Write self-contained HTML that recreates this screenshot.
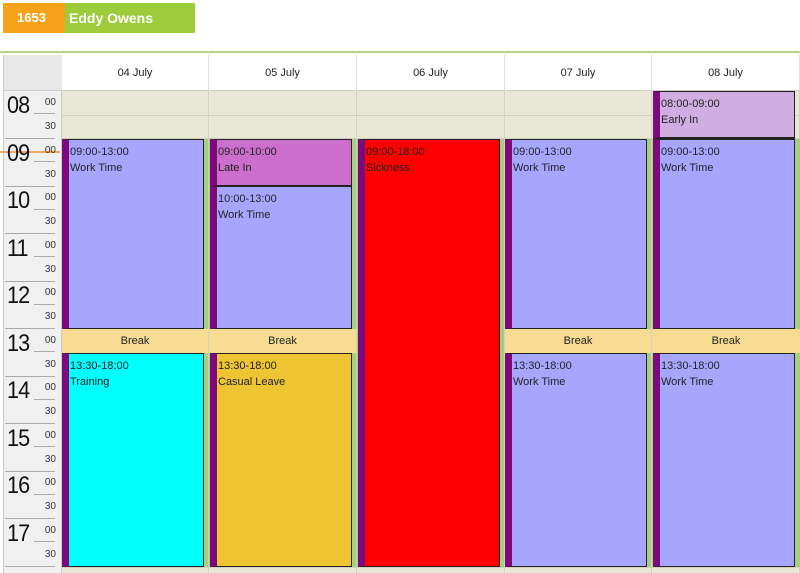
<!DOCTYPE html>
<html><head><meta charset="utf-8"><style>
*{margin:0;padding:0;box-sizing:border-box}
body{width:800px;height:573px;background:#fff;position:relative;overflow:hidden;font-family:"Liberation Sans","DejaVu Sans",sans-serif;font-size:11px;color:#222}
div{position:absolute}
.badge1{left:3px;top:3px;width:62px;height:30px;background:#f7a21b;color:#fff;font-weight:bold;font-size:13px;line-height:30px;padding-left:14px}
.badge2{left:65px;top:3px;width:130px;height:30px;background:#9ccc3c;color:#fff;font-weight:bold;font-size:14px;line-height:30px;padding-left:4px}
.gl{left:0;top:51px;width:800px;height:2px;background:#b9d48a}
.tc{left:3px;top:55px;width:59px;height:518px;background:#f0f0f0;border-left:1px solid #ccc;border-right:1px solid #ccc}
.hd{top:55px;height:36px;background:#fff;border-right:1px solid #ddd;border-bottom:1px solid #ccc;text-align:center;line-height:36px;font-size:11px}
.col{top:91px;height:482px;background:#e8e6d4;border-right:1px solid #d4d2c0}
.gr{top:139px;height:428px;background:#a6cf84}
.brk{top:329px;height:24px;background:#f5dc92;text-align:center;line-height:24px;font-size:11px}
.ln{height:1px;background:#d2d0be}
.ev{border:1px solid #222;border-left:7px solid #7c0a7c;padding:4px 0 0 1px;line-height:16px;font-size:11px}
.h{font-size:24px;color:#111;left:7px;width:30px;letter-spacing:-1px;transform:scaleX(0.9);transform-origin:left}
.m{font-size:10px;color:#333;left:36px;width:20px;text-align:right}
.hl{left:5px;width:50px;height:1px;background:#aaa}
.ml{left:34px;width:21px;height:1px;background:#aaa}
</style></head><body>
<div class="badge1">1653</div><div class="badge2">Eddy Owens</div>
<div class="gl"></div>
<div class="tc"></div>
<div style="left:3px;top:55px;width:59px;height:36px;background:#e8e8e8;border-bottom:1px solid #ccc;border-left:1px solid #ccc"></div>

<div class="hd" style="left:62px;width:147px">04 July</div>
<div class="hd" style="left:209px;width:148px">05 July</div>
<div class="hd" style="left:357px;width:148px">06 July</div>
<div class="hd" style="left:505px;width:147px">07 July</div>
<div class="hd" style="left:652px;width:148px">08 July</div>

<div class="col" style="left:62px;width:147px"></div>
<div class="col" style="left:209px;width:148px"></div>
<div class="col" style="left:357px;width:148px"></div>
<div class="col" style="left:505px;width:147px"></div>
<div class="col" style="left:652px;width:148px"></div>
<div class="ln" style="left:62px;top:115px;width:738px"></div>
<div class="ln" style="left:62px;top:138px;width:738px"></div>
<div class="ln" style="left:62px;top:567px;width:738px"></div>

<div class="gr" style="left:62px;width:146px"></div>
<div class="gr" style="left:209px;width:147px"></div>
<div class="gr" style="left:357px;width:147px"></div>
<div class="gr" style="left:505px;width:146px"></div>
<div class="gr" style="left:652px;width:148px"></div>

<div class="brk" style="left:62px;width:146px">Break</div>
<div class="brk" style="left:209px;width:147px">Break</div>
<div class="brk" style="left:505px;width:146px">Break</div>
<div class="brk" style="left:652px;width:148px">Break</div>

<div class="ev" style="left:62px;top:139px;width:142px;height:190px;background:#a6a6ff">09:00-13:00<br>Work Time</div>
<div class="ev" style="left:62px;top:353px;width:142px;height:214px;background:#00ffff">13:30-18:00<br>Training</div>
<div class="ev" style="left:210px;top:139px;width:142px;height:48px;background:#cc6ecc;border-bottom-width:2px">09:00-10:00<br>Late In</div>
<div class="ev" style="left:210px;top:186px;width:142px;height:143px;background:#a6a6ff">10:00-13:00<br>Work Time</div>
<div class="ev" style="left:210px;top:353px;width:142px;height:214px;background:#eec432">13:30-18:00<br>Casual Leave</div>
<div class="ev" style="left:358px;top:139px;width:142px;height:428px;background:#ff0000">09:00-18:00<br>Sickness</div>
<div class="ev" style="left:505px;top:139px;width:142px;height:190px;background:#a6a6ff">09:00-13:00<br>Work Time</div>
<div class="ev" style="left:505px;top:353px;width:142px;height:214px;background:#a6a6ff">13:30-18:00<br>Work Time</div>
<div class="ev" style="left:653px;top:91px;width:142px;height:48px;background:#d0aee2;border-bottom-width:2px">08:00-09:00<br>Early In</div>
<div class="ev" style="left:653px;top:139px;width:142px;height:190px;background:#a6a6ff">09:00-13:00<br>Work Time</div>
<div class="ev" style="left:653px;top:353px;width:142px;height:214px;background:#a6a6ff">13:30-18:00<br>Work Time</div>

<div style="left:0;top:151px;width:60px;height:2px;background:#f5a35a"></div>

<div class="h" style="top:92px">08</div><div class="m" style="top:97px">00</div><div class="ml" style="top:113px"></div><div class="m" style="top:121px">30</div>
<div class="hl" style="top:138px"></div>
<div class="h" style="top:140px">09</div><div class="m" style="top:145px">00</div><div class="ml" style="top:161px"></div><div class="m" style="top:169px">30</div>
<div class="hl" style="top:186px"></div>
<div class="h" style="top:187px">10</div><div class="m" style="top:192px">00</div><div class="ml" style="top:209px"></div><div class="m" style="top:216px">30</div>
<div class="hl" style="top:233px"></div>
<div class="h" style="top:235px">11</div><div class="m" style="top:240px">00</div><div class="ml" style="top:256px"></div><div class="m" style="top:264px">30</div>
<div class="hl" style="top:281px"></div>
<div class="h" style="top:282px">12</div><div class="m" style="top:287px">00</div><div class="ml" style="top:304px"></div><div class="m" style="top:311px">30</div>
<div class="hl" style="top:328px"></div>
<div class="h" style="top:330px">13</div><div class="m" style="top:335px">00</div><div class="ml" style="top:351px"></div><div class="m" style="top:359px">30</div>
<div class="hl" style="top:376px"></div>
<div class="h" style="top:377px">14</div><div class="m" style="top:382px">00</div><div class="ml" style="top:399px"></div><div class="m" style="top:406px">30</div>
<div class="hl" style="top:423px"></div>
<div class="h" style="top:425px">15</div><div class="m" style="top:430px">00</div><div class="ml" style="top:446px"></div><div class="m" style="top:454px">30</div>
<div class="hl" style="top:471px"></div>
<div class="h" style="top:472px">16</div><div class="m" style="top:477px">00</div><div class="ml" style="top:494px"></div><div class="m" style="top:501px">30</div>
<div class="hl" style="top:518px"></div>
<div class="h" style="top:520px">17</div><div class="m" style="top:525px">00</div><div class="ml" style="top:541px"></div><div class="m" style="top:549px">30</div>
<div class="hl" style="top:566px"></div>
</body></html>
